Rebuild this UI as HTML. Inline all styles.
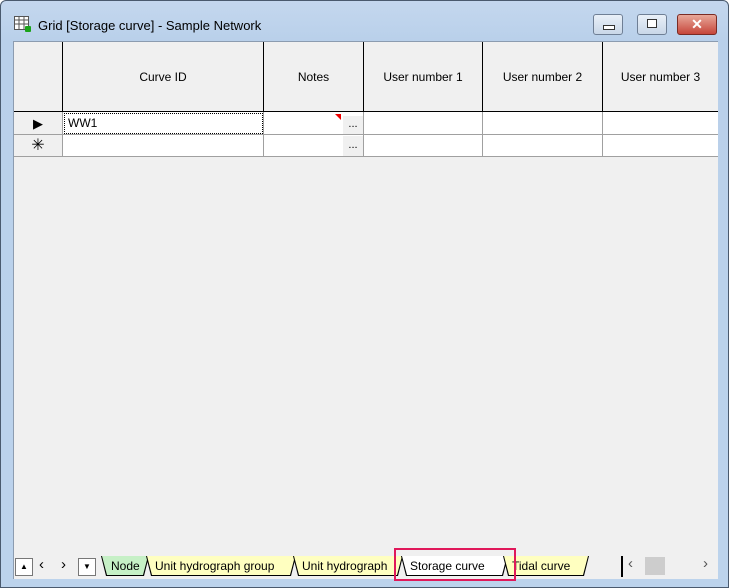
<!DOCTYPE html><html><head><style>
body{margin:0;width:729px;height:588px;overflow:hidden;font-family:"Liberation Sans",sans-serif;background:#fff}
.win{position:absolute;left:0;top:0;width:727px;height:586px;border:1px solid #4a5a6e;border-radius:6px 6px 0 0;background:linear-gradient(#c4d7ee,#b9d0ea 40px,#bcd3ec);}
.title{position:absolute;left:37px;top:17px;font-size:13px;color:#000}
.btn{position:absolute;top:13px;height:19px;border:1px solid #6f7f95;border-radius:3px;background:linear-gradient(#e9f0f8,#c9d7e8)}
.grid{position:absolute;left:12px;top:40px;width:704px;height:537px;background:#f0f0f0;border-left:1px solid #8c9cb0;border-top:1px solid #8c9cb0}
.c{position:absolute;box-sizing:border-box;font-size:12px}
.h{background:#f0f0f0;border-right:1px solid #000;border-bottom:1px solid #000;display:flex;align-items:center;justify-content:center;}
.cell{background:#fff;border-right:1px solid #a0a0a0;border-bottom:1px solid #a0a0a0}
.tab{position:absolute;top:555px;height:20px;font-size:12px;line-height:20px;padding:0 8px;box-sizing:border-box;clip-path:polygon(0 0,100% 0,calc(100% - 5px) 100%,5px 100%);white-space:nowrap;overflow:hidden}
</style></head><body>
<div class="win">
<svg style="position:absolute;left:13px;top:15px" width="18" height="17"><rect x="0.5" y="0.5" width="14" height="13" fill="#fff" stroke="#555"/><path d="M0 4h15M0 8h15M5 0v14M10 0v14" stroke="#555"/><rect x="11" y="10" width="6" height="6" rx="1" fill="#1aa31a"/></svg>
<div class="title">Grid [Storage curve] - Sample Network</div>
<div class="btn" style="left:592px;width:28px"><div style="position:absolute;left:9px;top:10px;width:10px;height:3px;background:#fff;border:1px solid #333"></div></div>
<div class="btn" style="left:636px;width:28px"><div style="position:absolute;left:9px;top:4px;width:8px;height:7px;border:1px solid #333;background:#fff"></div></div>
<div class="btn" style="left:676px;width:38px;background:linear-gradient(#e8a89a,#c6463a);border-color:#7a2b24;color:#fff;font-weight:bold;text-align:center;font-size:14px;line-height:19px">✕</div>
<div class="grid">
<div class="c h" style="left:0;top:0;width:49px;height:70px"></div>
<div class="c h" style="left:49px;top:0;width:201px;height:70px">Curve ID</div>
<div class="c h" style="left:250px;top:0;width:100px;height:70px">Notes</div>
<div class="c h" style="left:350px;top:0;width:119px;height:70px">User number 1</div>
<div class="c h" style="left:469px;top:0;width:120px;height:70px">User number 2</div>
<div class="c h" style="left:589px;top:0;width:115px;height:70px;border-right:none">User number 3</div>
<div class="c" style="left:0;top:70px;width:49px;height:23px;border-right:1px solid #a0a0a0;border-bottom:1px solid #a0a0a0;text-align:center;line-height:23px;font-size:13px">▶</div>
<div class="c" style="left:0;top:93px;width:49px;height:22px;border-right:1px solid #a0a0a0;border-bottom:1px solid #a0a0a0;text-align:center;line-height:22px;font-size:16px">✳</div>
<div class="c cell" style="left:49px;top:70px;width:201px;height:23px;outline:1px dotted #000;outline-offset:-2px;padding:4px 5px">WW1</div>
<div class="c cell" style="left:250px;top:70px;width:100px;height:23px"><div style="position:absolute;right:22px;top:2px;width:0;height:0;border-top:6px solid #e00;border-left:6px solid transparent"></div><div style="position:absolute;right:0;bottom:0;width:20px;height:18px;background:#f0f0f0;text-align:center;font-size:11px;line-height:16px">...</div></div>
<div class="c cell" style="left:350px;top:70px;width:119px;height:23px"></div>
<div class="c cell" style="left:469px;top:70px;width:120px;height:23px"></div>
<div class="c cell" style="left:589px;top:70px;width:115px;height:23px;border-right:none"></div>
<div class="c cell" style="left:49px;top:93px;width:201px;height:22px"></div>
<div class="c cell" style="left:250px;top:93px;width:100px;height:22px"><div style="position:absolute;right:0;bottom:0;width:20px;height:20px;background:#f0f0f0;text-align:center;font-size:11px;line-height:18px">...</div></div>
<div class="c cell" style="left:350px;top:93px;width:119px;height:22px"></div>
<div class="c cell" style="left:469px;top:93px;width:120px;height:22px"></div>
<div class="c cell" style="left:589px;top:93px;width:115px;height:22px;border-right:none"></div>
</div>
<div style="position:absolute;left:14px;top:557px;width:16px;height:16px;border:1px solid #777;background:#fff;font-size:8px;text-align:center;line-height:16px">▲</div>
<div style="position:absolute;left:38px;top:555px;font-size:15px">‹</div>
<div style="position:absolute;left:60px;top:555px;font-size:15px">›</div>
<div style="position:absolute;left:77px;top:557px;width:16px;height:16px;border:1px solid #777;background:#fff;font-size:8px;text-align:center;line-height:16px">▼</div>
<div class="tab" style="left:100px;width:48px;background:#000;"></div><div class="tab" style="left:101px;width:46px;height:19px;background:#c6f0c6;padding-left:9px">Node</div>
<div class="tab" style="left:145px;width:150px;background:#000"></div><div class="tab" style="left:146px;width:148px;height:19px;background:#ffffc0">Unit hydrograph group</div>
<div class="tab" style="left:292px;width:110px;background:#000"></div><div class="tab" style="left:293px;width:108px;height:19px;background:#ffffc0">Unit hydrograph</div>
<div class="tab" style="left:400px;width:107px;background:#000"></div><div class="tab" style="left:401px;width:105px;height:19px;background:#fff">Storage curve</div>
<div class="tab" style="left:502px;width:86px;background:#000"></div><div class="tab" style="left:503px;width:84px;height:19px;background:#ffffc0">Tidal curve</div>
<div style="position:absolute;left:393px;top:547px;width:122px;height:33px;border:2px solid #e0185a;box-sizing:border-box"></div>
<div style="position:absolute;left:620px;top:555px;width:2px;height:21px;background:#000"></div>
<div style="position:absolute;left:627px;top:554px;font-size:15px;color:#555">‹</div>
<div style="position:absolute;left:644px;top:556px;width:20px;height:18px;background:#cdcdcd"></div>
<div style="position:absolute;left:702px;top:554px;font-size:15px;color:#555">›</div>
</div>
</body></html>
